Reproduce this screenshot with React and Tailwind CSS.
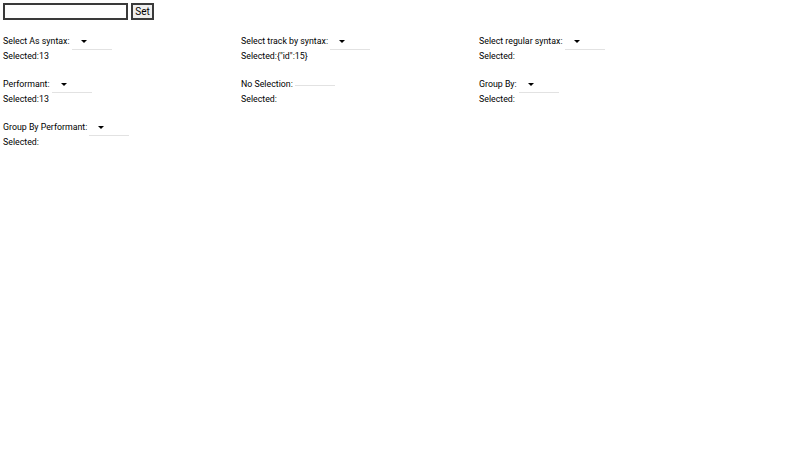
import React from 'react';

const Caret = () => (
  <span className="block w-0 h-0 border-x-[3px] border-t-[3px] border-x-transparent border-t-black" />
);

const SelectField = ({ label, value, noArrow }) => (
  <div className="flex flex-col">
    <div className="flex items-start h-[16px]">
      <span className="leading-[14px] whitespace-nowrap">{label}</span>
      {noArrow ? (
        <div className="ml-[2px] w-[40px] h-[9px] border-b border-[#e2e2e2]" />
      ) : (
        <div className="ml-[2px] w-[40px] h-[16px] border-b border-[#e2e2e2] flex items-center pl-[9px]">
          <Caret />
        </div>
      )}
    </div>
    <div className="leading-[12px] whitespace-nowrap">Selected:{value}</div>
  </div>
);

const App = () => {
  const fields = [
    { label: 'Select As syntax:', value: '13' },
    { label: 'Select track by syntax:', value: '{"id":15}' },
    { label: 'Select regular syntax:', value: '' },
    { label: 'Performant:', value: '13' },
    { label: 'No Selection:', value: '', noArrow: true },
    { label: 'Group By:', value: '' },
    { label: 'Group By Performant:', value: '' },
  ];

  return (
    <div className="w-[800px] h-[450px] bg-white p-[3px] text-black text-[8.8px]" style={{ fontFamily: 'Roboto, "Liberation Sans", sans-serif' }}>
      <div className="flex gap-[3px] h-[17px]">
        <input className="w-[125px] h-[17px] border-2 border-[#3a3a3a] bg-white outline-none" />
        <button className="w-[23px] h-[17px] border-2 border-[#3a3a3a] bg-[#efefef] text-[10px] leading-none flex items-center justify-center">Set</button>
      </div>
      <div className="grid grid-cols-[238px_238px_238px] gap-y-[15px] mt-[14px]">
        {fields.map((f) => (
          <SelectField key={f.label} {...f} />
        ))}
      </div>
    </div>
  );
};

export default App;
